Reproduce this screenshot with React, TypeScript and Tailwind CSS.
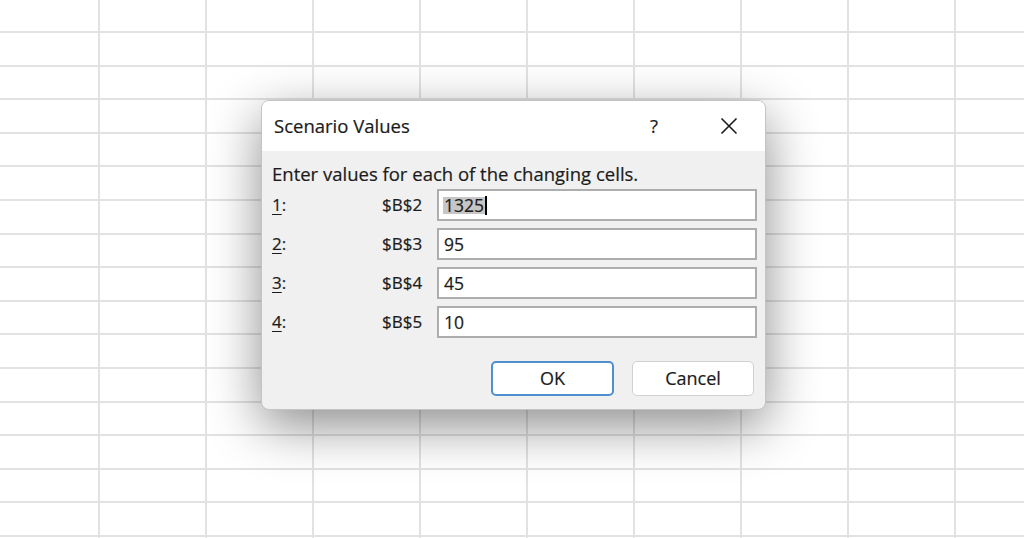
import React from 'react'

const rows = Array.from({ length: 17 })
const cols = Array.from({ length: 10 })

const cells = [
  { n: '1', ref: '$B$2', value: '1325', selected: true },
  { n: '2', ref: '$B$3', value: '95' },
  { n: '3', ref: '$B$4', value: '45' },
  { n: '4', ref: '$B$5', value: '10' },
]

function CloseIcon() {
  return (
    <svg width="18" height="18" viewBox="0 0 18 18" fill="none" stroke="#1b1b1b" strokeWidth="1.6">
      <path d="M1.5 1.5L16.5 16.5M16.5 1.5L1.5 16.5" />
    </svg>
  )
}

export default function App() {
  return (
    <div className="relative w-[1024px] h-[538px] overflow-hidden bg-white font-['Open_Sans',sans-serif] text-[#1b1b1b] [-webkit-text-stroke:0.2px_#1b1b1b]">
      {/* sheet grid */}
      <div className="flex flex-col -ml-[7px] -mt-[0.6px]">
        {rows.map((_, r) => (
          <div key={r} className="flex h-[33.6px] shrink-0">
            {cols.map((_, c) => (
              <div key={c} className="w-[107px] shrink-0 border-r-2 border-b-2 border-[#e2e2e2]" />
            ))}
          </div>
        ))}
      </div>

      {/* dialog */}
      <div className="absolute left-[261px] top-[100px] w-[505px] h-[310px] rounded-[8px] border border-[#c4c4c4] bg-[#f0f0f0] shadow-[0_16px_52px_rgba(0,0,0,0.45)] overflow-hidden flex flex-col">
        <div className="h-[50px] bg-white flex items-center pl-[12px] pr-[27px]">
          <span className="text-[18.5px] flex-1">Scenario Values</span>
          <span className="text-[18.5px] mr-[62px]">?</span>
          <CloseIcon />
        </div>
        <div className="flex flex-col pl-[10px] pr-[8px] pt-[10px]">
          <p className="text-[18.5px] leading-[25px]">Enter values for each of the changing cells.</p>
          <div className="flex flex-col gap-[7px] mt-[3px]">
            {cells.map((cell) => (
              <div key={cell.n} className="flex items-center h-[32px] text-[17px]">
                <span className="w-[110px]">
                  <span className="underline underline-offset-[3px]">{cell.n}</span>:
                </span>
                <span className="w-[39px] text-right">{cell.ref}</span>
                <div className="ml-[16px] flex-1 h-[32px] bg-white border-2 border-[#adadad] flex items-center pl-[4px] text-[17.5px]">
                  {cell.selected ? (
                    <>
                      <span className="bg-[#c6c6c6] px-[1px] leading-[17px]">{cell.value}</span>
                      <span className="w-[1.5px] h-[19px] bg-black" />
                    </>
                  ) : (
                    <span className="pl-[1px]">{cell.value}</span>
                  )}
                </div>
              </div>
            ))}
          </div>
          <div className="flex justify-end gap-[18px] mt-[23px] pr-[3px]">
            <button className="w-[123px] h-[35px] rounded-[5px] bg-white border-2 border-[#4f8fd0] text-[18px]">OK</button>
            <button className="w-[122px] h-[35px] rounded-[5px] bg-white border border-[#d0d0d0] text-[18px]">Cancel</button>
          </div>
        </div>
      </div>
    </div>
  )
}
